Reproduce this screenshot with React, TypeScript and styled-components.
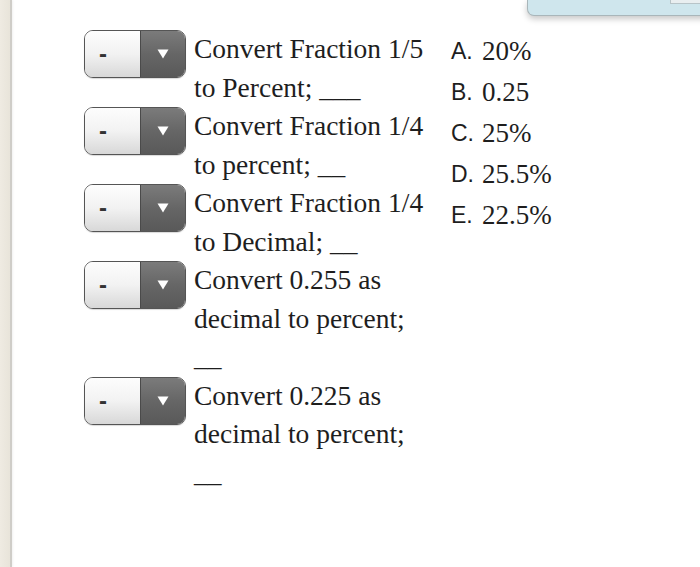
import styled, { createGlobalStyle } from 'styled-components';

const GlobalStyle = createGlobalStyle`
  html, body {
    margin: 0;
    padding: 0;
    background: #ffffff;
  }
  body {
    font-family: "Liberation Serif", "Times New Roman", serif;
    color: #222222;
  }
`;

type Question = {
  lines: string[];
};

const questions: Question[] = [
  { lines: ['Convert Fraction 1/5', 'to Percent; ___'] },
  { lines: ['Convert Fraction 1/4', 'to percent; __'] },
  { lines: ['Convert Fraction 1/4', 'to Decimal; __'] },
  { lines: ['Convert 0.255 as', 'decimal to percent;', '__'] },
  { lines: ['Convert 0.225 as', 'decimal to percent;', '__'] },
];

const options = [
  { label: 'A.', value: '20%' },
  { label: 'B.', value: '0.25' },
  { label: 'C.', value: '25%' },
  { label: 'D.', value: '25.5%' },
  { label: 'E.', value: '22.5%' },
];

const App = () => {
  return (
    <>
      <GlobalStyle />
      <Page>
        <Sidebar />
        <Main>
          <TopBar>
            <Notice>
              <NoticeTab />
            </Notice>
          </TopBar>
          <Content>
            <Questions>
              {questions.map((q, i) => (
                <Row key={i}>
                  <Select>
                    <SelectValue>-</SelectValue>
                    <SelectArrow>
                      <svg width="12" height="10" viewBox="0 0 12 10">
                        <polygon points="0.5,0.5 11.5,0.5 6,9.5" fill="#ffffff" />
                      </svg>
                    </SelectArrow>
                  </Select>
                  <QuestionText>
                    {q.lines.map((line) => (
                      <Line key={line}>{line}</Line>
                    ))}
                  </QuestionText>
                </Row>
              ))}
            </Questions>
            <Options>
              {options.map((o) => (
                <Option key={o.label}>
                  <OptionLabel>{o.label}</OptionLabel>
                  <OptionValue>{o.value}</OptionValue>
                </Option>
              ))}
            </Options>
          </Content>
        </Main>
      </Page>
    </>
  );
};

export default App;

const Page = styled.div`
  display: flex;
  width: 100%;
  height: 567px;
  overflow: hidden;
  background: #ffffff;
`;

const Sidebar = styled.div`
  width: 10px;
  flex-shrink: 0;
  background: linear-gradient(90deg, #efebe2, #e8e4da);
  border-right: 2px solid #cfcdc8;
  box-shadow: 1px 0 2px rgba(0, 0, 0, 0.06);
`;

const Main = styled.div`
  flex: 1;
  display: flex;
  flex-direction: column;
`;

const TopBar = styled.div`
  height: 16px;
  display: flex;
  justify-content: flex-end;
  margin-right: -12px;
`;

const Notice = styled.div`
  width: 185px;
  height: 16px;
  box-sizing: border-box;
  background: #cfe6ed;
  border: 1px solid #a9b6ba;
  border-top: none;
  border-radius: 0 0 0 7px;
  box-shadow: 0 3px 6px rgba(0, 0, 0, 0.22);
  display: flex;
  justify-content: flex-end;
  align-items: flex-start;
`;

const NoticeTab = styled.div`
  width: 40px;
  height: 3px;
  background: #e9eef0;
  border-left: 1px solid #b8c4c8;
  border-bottom: 1px solid #b8c4c8;
`;

const Content = styled.div`
  display: flex;
  align-items: flex-start;
  padding-left: 72px;
  margin-top: 14px;
`;

const Questions = styled.div`
  display: flex;
  flex-direction: column;
`;

const Row = styled.div`
  display: flex;
  align-items: flex-start;
  gap: 8px;
`;

const Select = styled.div`
  display: flex;
  width: 102px;
  height: 48px;
  box-sizing: border-box;
  border: 1.5px solid #555555;
  border-radius: 9px;
  overflow: hidden;
  flex-shrink: 0;
  box-shadow: 0 1px 1px rgba(0, 0, 0, 0.15);
`;

const SelectValue = styled.div`
  flex: 1;
  display: flex;
  align-items: center;
  padding-left: 14px;
  background: linear-gradient(#fdfdfd, #f2f2f2 50%, #d8d8d8);
  border-right: 1px solid #4a4a4a;
  font-family: "Liberation Sans", Arial, sans-serif;
  font-weight: bold;
  font-size: 24px;
  color: #333333;
`;

const SelectArrow = styled.div`
  width: 44px;
  display: flex;
  align-items: center;
  justify-content: center;
  background: linear-gradient(#7b7b7b, #666666 50%, #595959);
`;

const QuestionText = styled.div`
  width: 257px;
  display: flex;
  flex-direction: column;
`;

const Line = styled.span`
  font-family: "Liberation Serif", "Times New Roman", serif;
  font-size: 27.5px;
  line-height: 38.5px;
  white-space: pre;
  color: #1e1e1e;
`;

const Options = styled.div`
  display: flex;
  flex-direction: column;
  padding-top: 1px;
`;

const Option = styled.div`
  height: 41px;
  display: flex;
  align-items: center;
  white-space: pre;
  color: #1e1e1e;
`;

const OptionLabel = styled.span`
  width: 31px;
  font-family: "Liberation Sans", Arial, sans-serif;
  font-size: 23px;
`;

const OptionValue = styled.span`
  font-family: "Liberation Serif", "Times New Roman", serif;
  font-size: 27px;
`;
